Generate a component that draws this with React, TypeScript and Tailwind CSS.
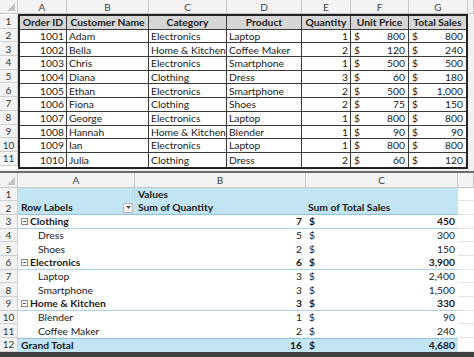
import React from "react";

// Top sheet: raw orders
interface OrderRow {
  id: number;
  name: string;
  category: string;
  product: string;
  qty: number;
  price: string;
  total: string;
}

const orders: OrderRow[] = [
  { id: 1001, name: "Adam", category: "Electronics", product: "Laptop", qty: 1, price: "800", total: "800" },
  { id: 1002, name: "Bella", category: "Home & Kitchen", product: "Coffee Maker", qty: 2, price: "120", total: "240" },
  { id: 1003, name: "Chris", category: "Electronics", product: "Smartphone", qty: 1, price: "500", total: "500" },
  { id: 1004, name: "Diana", category: "Clothing", product: "Dress", qty: 3, price: "60", total: "180" },
  { id: 1005, name: "Ethan", category: "Electronics", product: "Smartphone", qty: 2, price: "500", total: "1,000" },
  { id: 1006, name: "Fiona", category: "Clothing", product: "Shoes", qty: 2, price: "75", total: "150" },
  { id: 1007, name: "George", category: "Electronics", product: "Laptop", qty: 1, price: "800", total: "800" },
  { id: 1008, name: "Hannah", category: "Home & Kitchen", product: "Blender", qty: 1, price: "90", total: "90" },
  { id: 1009, name: "Ian", category: "Electronics", product: "Laptop", qty: 1, price: "800", total: "800" },
  { id: 1010, name: "Julia", category: "Clothing", product: "Dress", qty: 2, price: "60", total: "120" },
];

// Bottom sheet: pivot rows
interface PivotRow {
  kind: "group" | "item";
  label: string;
  qty: number;
  total: string;
}

const pivot: PivotRow[] = [
  { kind: "group", label: "Clothing", qty: 7, total: "450" },
  { kind: "item", label: "Dress", qty: 5, total: "300" },
  { kind: "item", label: "Shoes", qty: 2, total: "150" },
  { kind: "group", label: "Electronics", qty: 6, total: "3,900" },
  { kind: "item", label: "Laptop", qty: 3, total: "2,400" },
  { kind: "item", label: "Smartphone", qty: 3, total: "1,500" },
  { kind: "group", label: "Home & Kitchen", qty: 3, total: "330" },
  { kind: "item", label: "Blender", qty: 1, total: "90" },
  { kind: "item", label: "Coffee Maker", qty: 2, total: "240" },
];

const topCols = "grid grid-cols-[47px_82px_78px_75px_49px_58px_57px]";
const bottomCols = "grid grid-cols-[18px_117px_171px_152px_1fr]";

const Corner = () => (
  <div className="relative h-full w-[18px] border-r border-b border-[#c6c6c6] bg-[#f3f3f3]">
    <svg className="absolute right-[2px] bottom-[2px]" width="8" height="8" viewBox="0 0 8 8">
      <path d="M8 0 L8 8 L0 8 Z" fill="#c3c3c3" />
    </svg>
  </div>
);

const ColHead = ({ label, className = "" }: { label: string; className?: string }) => (
  <div
    className={`flex items-center justify-center border-r border-b border-[#c6c6c6] bg-[#f3f3f3] text-[10px] text-[#444] ${className}`}
  >
    {label}
  </div>
);

const RowNum = ({ n, className = "" }: { n: number; className?: string }) => (
  <div
    className={`flex h-[13.7px] w-[18px] items-center justify-center border-r border-b border-[#cfcfcf] bg-[#f3f3f3] text-[10px] text-[#333] ${className}`}
  >
    {n}
  </div>
);

const Money = ({ value, bold = false }: { value: string; bold?: boolean }) => (
  <div className={`flex w-full items-center justify-between px-[3px] ${bold ? "font-bold" : ""}`}>
    <span>$</span>
    <span>{value}</span>
  </div>
);

const MinusBox = () => (
  <span className="mr-[2px] inline-flex h-[7px] w-[7px] items-center justify-center border border-[#8a8a8a] bg-white">
    <span className="h-px w-[3px] bg-[#555]" />
  </span>
);

function OrdersSheet() {
  const cell = "flex items-center h-[13.7px] border-r border-b border-[#3a3a3a] px-[2px] overflow-hidden whitespace-nowrap";
  return (
    <div>
      {/* column letters */}
      <div className="flex h-[14px]">
        <Corner />
        <div className="grid flex-1 grid-cols-[49px_82px_78px_75px_49px_58px_59px_1fr]">
          {["A", "B", "C", "D", "E", "F", "G", ""].map((l, i) => (
            <ColHead key={i} label={l} />
          ))}
        </div>
      </div>
      <div className="flex">
        <div className="flex flex-col pt-[1px]">
          {Array.from({ length: 11 }, (_, i) => (
            <RowNum key={i} n={i + 1} />
          ))}
        </div>
        <div className="border-2 border-[#222] bg-white">
          <div className={`${topCols} bg-[#d6d6d6] font-bold`}>
            <div className={`${cell} justify-center`}>Order ID</div>
            <div className={`${cell} justify-center`}>Customer Name</div>
            <div className={`${cell} justify-center`}>Category</div>
            <div className={`${cell} justify-center`}>Product</div>
            <div className={`${cell} justify-center`}>Quantity</div>
            <div className={`${cell} justify-center`}>Unit Price</div>
            <div className={`${cell} justify-center border-r-0`}>Total Sales</div>
          </div>
          {orders.map((o, i) => {
            const last = i === orders.length - 1 ? "border-b-0" : "";
            return (
              <div key={o.id} className={topCols}>
                <div className={`${cell} justify-end ${last}`}>{o.id}</div>
                <div className={`${cell} ${last}`}>{o.name}</div>
                <div className={`${cell} ${last}`}>{o.category}</div>
                <div className={`${cell} ${last}`}>{o.product}</div>
                <div className={`${cell} justify-end ${last}`}>{o.qty}</div>
                <div className={`${cell} !px-0 ${last}`}>
                  <Money value={o.price} />
                </div>
                <div className={`${cell} !px-0 border-r-0 ${last}`}>
                  <Money value={o.total} />
                </div>
              </div>
            );
          })}
        </div>
        <div className="flex-1 bg-[#f0f0f0]" />
      </div>
    </div>
  );
}

function PivotSheet() {
  const blue = "bg-[#c3e4f3]";
  return (
    <div>
      <div className={`${bottomCols} h-[15px]`}>
        <Corner />
        <ColHead label="A" />
        <ColHead label="B" />
        <ColHead label="C" />
        <ColHead label="" />
      </div>

      {/* header row 1 */}
      <div className={`${bottomCols} h-[13.7px]`}>
        <RowNum n={1} />
        <div className={`${blue} border-r border-[#b3d6e6]`} />
        <div className={`${blue} flex items-center pl-[3px] font-bold`}>Values</div>
        <div className={blue} />
        <div className="border-b border-[#e2e2e2] bg-white" />
      </div>

      {/* header row 2 */}
      <div className={`${bottomCols} h-[13.7px]`}>
        <RowNum n={2} />
        <div className={`${blue} flex items-center justify-between border-b border-[#8fc3dd] pl-[3px] pr-[2px] font-bold`}>
          <span>Row Labels</span>
          <span className="flex h-[10px] w-[10px] items-center justify-center border border-[#b9b9b9] bg-[#f4f4f4]">
            <svg width="5" height="3" viewBox="0 0 5 3">
              <path d="M0 0 L5 0 L2.5 3 Z" fill="#555" />
            </svg>
          </span>
        </div>
        <div className={`${blue} flex items-center border-b border-[#8fc3dd] pl-[3px] font-bold`}>Sum of Quantity</div>
        <div className={`${blue} flex items-center border-b border-[#8fc3dd] pl-[2px] font-bold`}>Sum of Total Sales</div>
        <div className="border-b border-[#e2e2e2] bg-white" />
      </div>

      {pivot.map((p, i) => {
        const group = p.kind === "group";
        const line = group ? "border-b border-[#a9d3e8]" : "";
        return (
          <div key={i} className={`${bottomCols} h-[13.7px]`}>
            <RowNum n={i + 3} />
            <div className={`flex items-center bg-white ${line} ${group ? "pl-[3px] font-bold" : "pl-[20px]"}`}>
              {group && <MinusBox />}
              <span>{p.label}</span>
            </div>
            <div className={`flex items-center justify-end bg-white pr-[4px] ${line} ${group ? "font-bold" : ""}`}>
              {p.qty}
            </div>
            <div className={`flex items-center bg-white ${line}`}>
              <Money value={p.total} bold={group} />
            </div>
            <div className="border-b border-[#e2e2e2] bg-white" />
          </div>
        );
      })}

      {/* grand total */}
      <div className={`${bottomCols} h-[13.7px]`}>
        <RowNum n={12} />
        <div className={`${blue} flex items-center border-t border-[#8fc3dd] pl-[3px] font-bold`}>Grand Total</div>
        <div className={`${blue} flex items-center justify-end border-t border-[#8fc3dd] pr-[4px] font-bold`}>16</div>
        <div className={`${blue} flex items-center border-t border-[#8fc3dd]`}>
          <Money value="4,680" bold />
        </div>
        <div className="border-b border-[#e2e2e2] bg-white" />
      </div>
    </div>
  );
}

export default function App() {
  return (
    <div
      className="flex h-[357px] w-[474px] flex-col overflow-hidden bg-white text-[10.3px] leading-none text-[#1a1a1a]"
      style={{ fontFamily: "Lato, 'Open Sans', sans-serif" }}
    >
      <OrdersSheet />
      {/* split between the two sheets */}
      <div className="h-[2px] bg-[#f0f0f0]" />
      <div className="h-[2px] bg-[#6b6b6b]" />
      <PivotSheet />
      <div className="flex-1 bg-white" />
      <div className="h-[5px] bg-[#3f3f3f]" />
    </div>
  );
}
